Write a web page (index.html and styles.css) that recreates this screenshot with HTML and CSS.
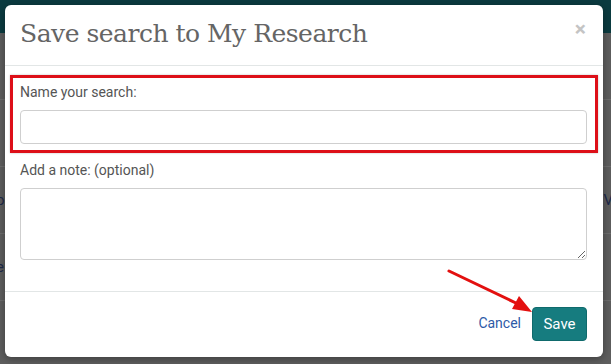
FILE: index.html
```html
<!DOCTYPE html>
<html lang="en">
<head>
    <meta charset="UTF-8">
    <meta name="viewport" content="width=device-width, initial-scale=1.0">
    <title>Save search</title>
    <link rel="stylesheet" href="styles.css">
</head>
<body>
    <!-- page behind the modal, dimmed -->
    <div class="page">
        <div class="topbar"></div>
        <div class="row"></div>
        <div class="row"></div>
        <div class="row"><span class="peek-left">o</span><span class="peek-right">V</span></div>
        <div class="row"><span class="peek-left">e</span></div>
    </div>

    <div class="modal">
        <div class="modal-header">
            <h2 class="modal-title">Save search to My Research</h2>
            <span class="close">&times;</span>
        </div>
        <div class="modal-body">
            <div class="highlight">
                <label for="searchName">Name your search:</label>
                <input type="text" id="searchName">
            </div>
            <div class="form-group">
                <label for="searchNote">Add a note: (optional)</label>
                <textarea id="searchNote"></textarea>
            </div>
        </div>
        <div class="modal-footer">
            <a href="#" class="cancel-link">Cancel</a>
            <button class="save-button">Save</button>
        </div>
    </div>

    <!-- annotation arrow -->
    <svg class="arrow" width="611" height="364" viewBox="0 0 611 364">
        <line x1="449" y1="271" x2="518" y2="304" stroke="#e3100f" stroke-width="3" stroke-linecap="round"/>
        <polygon points="532,312 512,309 519,296" fill="#e3100f"/>
    </svg>
</body>
</html>
```

FILE: styles.css
```css
body {
    margin: 0;
    width: 611px;
    height: 364px;
    overflow: hidden;
    background-color: #5e5e5e;
    font-family: Roboto, 'Liberation Sans', Arial, sans-serif;
}

.page {
    width: 100%;
}

.topbar {
    height: 33px;
    background-color: #0b3b40;
}

.row {
    height: 66px;
    border-bottom: 1px solid #6d6d6d;
    display: flex;
    align-items: center;
    justify-content: space-between;
    color: #1e2a4a;
    font-size: 15px;
}

.peek-left {
    margin-left: -4px;
}

.peek-right {
    margin-right: -2px;
}

.modal {
    position: absolute;
    top: 5px;
    left: 5px;
    width: 598px;
    height: 352px;
    background-color: #fff;
    border-radius: 6px;
    box-shadow: 0 2px 8px rgba(0, 0, 0, 0.35);
    display: flex;
    flex-direction: column;
}

.modal-header {
    height: 60px;
    border-bottom: 1px solid #e2e6e6;
    display: flex;
    align-items: flex-start;
    justify-content: space-between;
    padding: 0 15px;
}

.modal-title {
    margin: 14px 0 0 0;
    font-family: 'DejaVu Serif', 'Liberation Serif', serif;
    font-weight: normal;
    font-size: 25px;
    color: #656565;
    letter-spacing: -0.5px;
}

.close {
    margin-top: 12px;
    margin-right: 2px;
    font-size: 21px;
    font-weight: bold;
    color: #c4c4c4;
}

.modal-body {
    padding: 9px 5px 0 5px;
    height: 216px;
}

.highlight {
    border: 3px solid #dd0f18;
    padding: 4px 8px 6px 7px;
    box-shadow: 0 0 2px rgba(0, 0, 0, 0.25);
}

label {
    display: block;
    font-size: 14px;
    line-height: 20px;
    color: #555;
    margin-bottom: 8px;
}

input, textarea {
    display: block;
    width: 100%;
    box-sizing: border-box;
    border: 1px solid #cfcfcf;
    border-radius: 4px;
    font-family: Roboto, sans-serif;
    font-size: 14px;
    margin: 0;
}

input {
    height: 34px;
}

textarea {
    height: 72px;
    resize: vertical;
}

.form-group {
    padding: 7px 11px 0 10px;
}

.modal-footer {
    border-top: 1px solid #e2e6e6;
    flex: 1;
    display: flex;
    align-items: flex-start;
    justify-content: flex-end;
    padding: 15px 16px 0 0;
}

.cancel-link {
    margin-top: 8px;
    margin-right: 11px;
    font-size: 14px;
    color: #2d5aa7;
    text-decoration: none;
}

.save-button {
    width: 55px;
    height: 34px;
    padding: 0;
    font-family: Roboto, sans-serif;
    font-size: 15px;
    color: #fff;
    background-color: #167c7f;
    border: 1px solid #0f6a6c;
    border-radius: 4px;
    cursor: pointer;
}

.arrow {
    position: absolute;
    top: 0;
    left: 0;
    pointer-events: none;
}
```
